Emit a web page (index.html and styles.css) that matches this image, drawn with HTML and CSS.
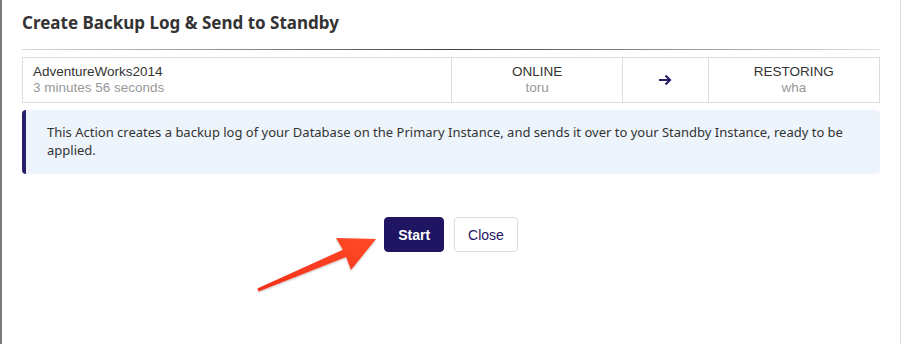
FILE: index.html
```html
<!DOCTYPE html>
<html lang="en">
<head>
    <meta charset="UTF-8">
    <meta name="viewport" content="width=device-width, initial-scale=1.0">
    <title>Create Backup Log</title>
    <link rel="stylesheet" href="styles.css">
</head>
<body>
    <div class="modal">
        <h2 class="modalTitle">Create Backup Log &amp; Send to Standby</h2>
        <hr class="divisor">

        <div class="statusTable">
            <div class="cell cellDb">
                <span class="mainText">AdventureWorks2014</span>
                <span class="subText">3 minutes 56 seconds</span>
            </div>
            <div class="cell cellState">
                <span class="mainText">ONLINE</span>
                <span class="subText">toru</span>
            </div>
            <div class="cell cellArrow">
                <svg width="14" height="12" viewBox="0 0 14 12">
                    <path d="M1 6 H12 M7.5 1.5 L12 6 L7.5 10.5" fill="none" stroke="#2a1f6b" stroke-width="2.2"/>
                </svg>
            </div>
            <div class="cell cellState">
                <span class="mainText">RESTORING</span>
                <span class="subText">wha</span>
            </div>
        </div>

        <div class="infoBox">
            This Action creates a backup log of your Database on the Primary Instance, and sends it over to your Standby Instance, ready to be applied.
        </div>

        <div class="actions">
            <button class="btn btnStart">Start</button>
            <button class="btn btnClose">Close</button>
        </div>

        <svg class="pointer" width="907" height="344" viewBox="0 0 907 344">
            <defs>
                <linearGradient id="red" x1="0" y1="1" x2="1" y2="0">
                    <stop offset="0" stop-color="#f3301c"/>
                    <stop offset="1" stop-color="#ff4a26"/>
                </linearGradient>
                <filter id="shadow" x="-10%" y="-10%" width="120%" height="130%">
                    <feDropShadow dx="0" dy="1" stdDeviation="1" flood-color="#000" flood-opacity="0.25"/>
                </filter>
            </defs>
            <polygon points="258.6,291.4 346.1,257.1 351,270 376,239 336,238 342.9,249.7 257.4,288.6" fill="url(#red)" filter="url(#shadow)"/>
        </svg>
    </div>
</body>
</html>
```

FILE: styles.css
```css
* {
    margin: 0;
    padding: 0;
    box-sizing: border-box;
}

body {
    font-family: "Noto Sans", "Liberation Sans", sans-serif;
    background: #fff;
    color: #333;
}

.modal {
    position: relative;
    width: 901px;
    height: 344px;
    padding: 11px 20px 0 20px;
    border-left: 2px solid #7a7a7a;
    border-right: 1px solid #ddd;
}

.modalTitle {
    font-size: 17px;
    line-height: 24px;
    font-weight: 700;
    color: #333;
}

.divisor {
    border: 0;
    height: 1px;
    margin-top: 14px;
    background-image: linear-gradient(to right, rgba(0, 0, 0, 0.15), rgba(0, 0, 0, 0.75), rgba(0, 0, 0, 0.12));
}

.statusTable {
    display: grid;
    grid-template-columns: 50% 20% 10% 20%;
    margin-top: 7px;
    border: 1px solid #ddd;
}

.cell {
    display: flex;
    flex-direction: column;
    padding: 6px 10px;
    font-family: "Liberation Sans", Arial, sans-serif;
    font-size: 13.5px;
    line-height: 16px;
}

.cell + .cell {
    border-left: 1px solid #ddd;
}

.cellState {
    align-items: center;
}

.cellArrow {
    align-items: center;
    justify-content: center;
}

.mainText {
    color: #333;
}

.subText {
    color: #999;
}

.infoBox {
    margin-top: 7px;
    padding: 13px 20px 15px 21px;
    background: #eef4fb;
    border-left: 4px solid #2a1f6b;
    border-radius: 4px;
    font-size: 13px;
    line-height: 18px;
    color: #333;
}

.actions {
    display: flex;
    justify-content: center;
    gap: 10px;
    margin-top: 43px;
}

.btn {
    height: 35px;
    padding: 0 13px;
    border-radius: 4px;
    font-family: "Liberation Sans", Arial, sans-serif;
    font-size: 14px;
    cursor: pointer;
}

.btnStart {
    background: #1f1563;
    border: 1px solid #1f1563;
    color: #fff;
    font-weight: 700;
}

.btnClose {
    background: #fff;
    border: 1px solid #ddd;
    color: #1f1563;
}

.pointer {
    position: absolute;
    left: -2px;
    top: 0;
    pointer-events: none;
}
```
